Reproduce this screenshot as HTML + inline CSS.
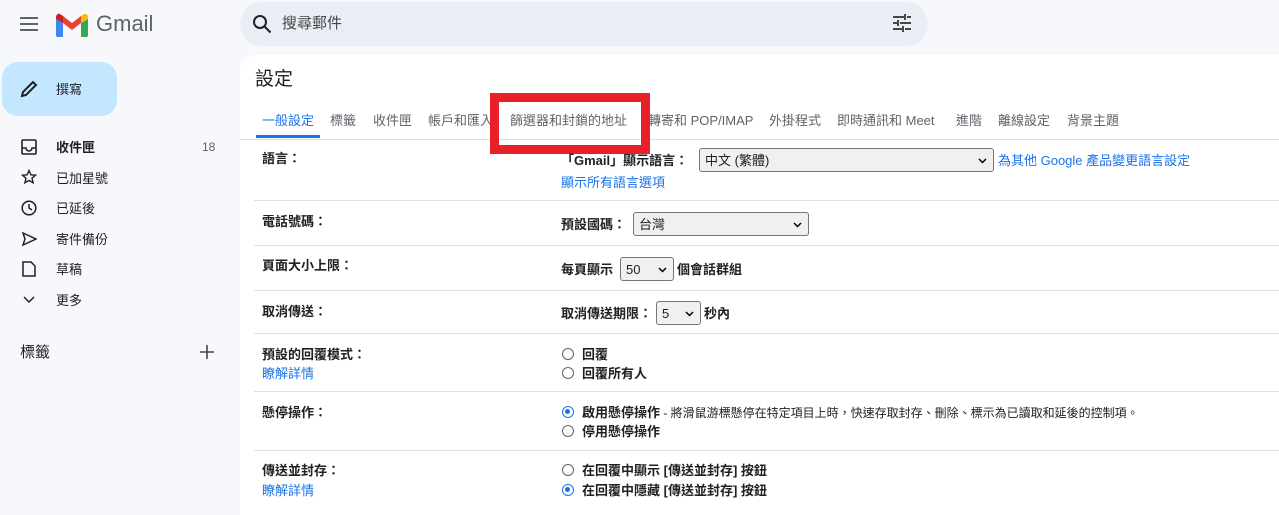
<!DOCTYPE html>
<html><head><meta charset="utf-8"><style>
*{margin:0;padding:0;box-sizing:border-box}
body{width:1279px;height:507px;overflow:hidden;background:#f6f8fc;font-family:"Liberation Sans","Noto Sans CJK TC",sans-serif;color:#202124;position:relative;font-size:13px;line-height:15px}
.a{position:absolute;white-space:nowrap}
.panel{position:absolute;left:240px;top:55px;width:1039px;height:460px;background:#fff;border-radius:16px 0 0 0}
.tab{position:absolute;top:113px;font-size:13px;color:#5f6368}
.hr{position:absolute;left:254px;width:1025px;height:1px;background:#e0e0e0}
.lbl{position:absolute;left:262px;font-size:13px;font-weight:bold;color:#202124}
.v{position:absolute;font-size:13px;font-weight:bold;white-space:nowrap}
.link{color:#1a73e8;font-weight:normal}
.sel{position:absolute;height:24px;border:1px solid #767676;border-radius:3px;background:#f0f0f0;font-size:13px;padding:4px 5px;font-weight:normal}
.sel svg{position:absolute;right:6px;top:9px}
.r{position:absolute;width:12px;height:12px;border:1.5px solid #5f6368;border-radius:50%}
.r.on{border-color:#1a73e8}
.r.on:after{content:"";position:absolute;left:2px;top:2px;width:5px;height:5px;border-radius:50%;background:#1a73e8}
.nav{position:absolute;left:56px;font-size:13px;color:#202124}
</style></head><body>
<svg class="a" style="left:19px;top:16px" width="20" height="16"><path d="M1 2h18M1 8h18M1 14h18" stroke="#5f6368" stroke-width="2"/></svg>
<svg class="a" style="left:56px;top:13px" width="32" height="24" viewBox="0 0 32 24"><path d="M0 6v16a2 2 0 0 0 2 2h5V10z" fill="#4285f4"/><path d="M25 10v14h5a2 2 0 0 0 2-2V6z" fill="#34a853"/><path d="M7 10l9 7 9-7V3L16 10 7 3z" fill="#ea4335"/><path d="M0 6l7 4V3L4 1C2 0 0 2 0 4z" fill="#c5221f"/><path d="M25 3v7l7-4V4c0-2-2-4-4-3z" fill="#fbbc04"/></svg>
<div class="a" style="left:96px;top:12px;font-size:22px;line-height:24px;color:#5f6368">Gmail</div>
<div class="a" style="left:240px;top:2px;width:688px;height:44px;background:#e9eef6;border-radius:22px"></div>
<svg class="a" style="left:252px;top:14px" width="20" height="20"><circle cx="8" cy="8" r="6" fill="none" stroke="#202124" stroke-width="2"/><path d="M12.5 12.5l6 6" stroke="#202124" stroke-width="2"/></svg>
<div class="a" style="left:282px;top:15px;font-size:15px;line-height:17px;color:#444746">搜尋郵件</div>
<svg class="a" style="left:892px;top:14px" width="20" height="18"><path d="M1 3h11M15 3h4M1 9h4M8 9h11M1 15h9M13 15h6M13 0v6M6 6v6M11 12v6" stroke="#444746" stroke-width="2"/></svg>
<div class="a" style="left:2px;top:62px;width:115px;height:54px;background:#c2e7ff;border-radius:16px"></div>
<svg class="a" style="left:20px;top:80px" width="18" height="18"><path d="M2 16l1-4L13 2l3 3L6 15z" fill="none" stroke="#202124" stroke-width="2"/></svg>
<div class="a" style="left:56px;top:82px;font-size:13px">撰寫</div>
<svg class="a" style="left:21px;top:139px" width="16" height="16"><rect x="1" y="1" width="14" height="14" rx="1" fill="none" stroke="#202124" stroke-width="1.6"/><path d="M1 9h4a3 3 0 0 0 6 0h4" fill="none" stroke="#202124" stroke-width="1.6"/></svg>
<div class="nav" style="top:140px;font-weight:bold">收件匣</div><div class="a" style="left:202px;top:140px;font-size:12px;color:#5f6368">18</div>
<svg class="a" style="left:21px;top:169px" width="16" height="16"><path d="M8 1.5l1.9 4.3 4.6.4-3.5 3 1.1 4.6L8 11.4l-4.1 2.4L5 9.2l-3.5-3 4.6-.4z" fill="none" stroke="#202124" stroke-width="1.4"/></svg><div class="nav" style="top:171px">已加星號</div>
<svg class="a" style="left:21px;top:200px" width="16" height="16"><circle cx="8" cy="8" r="6.8" fill="none" stroke="#202124" stroke-width="1.5"/><path d="M8 4v4l3 2" fill="none" stroke="#202124" stroke-width="1.5"/></svg><div class="nav" style="top:201px">已延後</div>
<svg class="a" style="left:21px;top:231px" width="16" height="16"><path d="M2 2l13 6-13 6 2-6z" fill="none" stroke="#202124" stroke-width="1.5"/></svg><div class="nav" style="top:232px">寄件備份</div>
<svg class="a" style="left:22px;top:261px" width="14" height="16"><path d="M1 1h8l4 4v10H1z" fill="none" stroke="#202124" stroke-width="1.5"/></svg><div class="nav" style="top:262px">草稿</div>
<svg class="a" style="left:23px;top:296px" width="12" height="8"><path d="M1 1l5 5 5-5" fill="none" stroke="#202124" stroke-width="1.5"/></svg><div class="nav" style="top:293px">更多</div>
<div class="a" style="left:20px;top:344px;font-size:15px;line-height:17px">標籤</div>
<svg class="a" style="left:200px;top:345px" width="14" height="14"><path d="M7 0v14M0 7h14" stroke="#444746" stroke-width="1.6"/></svg>
<div class="panel"></div>
<div class="a" style="left:255px;top:69px;font-size:19px;line-height:22px;color:#202124">設定</div>
<div class="tab" style="left:262px;color:#1a73e8">一般設定</div>
<div class="a" style="left:256px;top:135px;width:64px;height:3px;background:#1a73e8"></div>
<div class="tab" style="left:330px">標籤</div>
<div class="tab" style="left:373px">收件匣</div>
<div class="tab" style="left:428px">帳戶和匯入</div>
<div class="tab" style="left:510px">篩選器和封鎖的地址</div>
<div class="tab" style="left:648px">轉寄和 POP/IMAP</div>
<div class="tab" style="left:769px">外掛程式</div>
<div class="tab" style="left:837px">即時通訊和 Meet</div>
<div class="tab" style="left:956px">進階</div>
<div class="tab" style="left:998px">離線設定</div>
<div class="tab" style="left:1067px">背景主題</div>
<div class="a" style="left:240px;top:139px;width:1039px;height:1px;background:#e0e0e0"></div>
<div class="a" style="left:490px;top:93px;width:160px;height:61px;border:9px solid #e8202a"></div>
<div class="lbl" style="top:151px">語言：</div>
<div class="v" style="left:561px;top:153px">「Gmail」顯示語言：</div>
<div class="sel" style="left:699px;top:148px;width:295px">中文 (繁體)<svg width="9" height="6"><path d="M1 1l3.5 3.5L8 1" fill="none" stroke="#000" stroke-width="1.5"/></svg></div>
<div class="v link" style="left:998px;top:153px">為其他 Google 產品變更語言設定</div>
<div class="v link" style="left:561px;top:175px">顯示所有語言選項</div>
<div class="hr" style="top:200px"></div>
<div class="lbl" style="top:214px">電話號碼：</div>
<div class="v" style="left:561px;top:217px">預設國碼：</div>
<div class="sel" style="left:633px;top:212px;width:176px">台灣<svg width="9" height="6"><path d="M1 1l3.5 3.5L8 1" fill="none" stroke="#000" stroke-width="1.5"/></svg></div>
<div class="hr" style="top:245px"></div>
<div class="lbl" style="top:258px">頁面大小上限：</div>
<div class="v" style="left:561px;top:262px">每頁顯示</div>
<div class="sel" style="left:620px;top:257px;width:54px">50<svg width="9" height="6"><path d="M1 1l3.5 3.5L8 1" fill="none" stroke="#000" stroke-width="1.5"/></svg></div>
<div class="v" style="left:677px;top:262px">個會話群組</div>
<div class="hr" style="top:290px"></div>
<div class="lbl" style="top:304px">取消傳送：</div>
<div class="v" style="left:561px;top:306px">取消傳送期限：</div>
<div class="sel" style="left:656px;top:301px;width:45px">5<svg width="9" height="6"><path d="M1 1l3.5 3.5L8 1" fill="none" stroke="#000" stroke-width="1.5"/></svg></div>
<div class="v" style="left:704px;top:306px">秒內</div>
<div class="hr" style="top:333px"></div>
<div class="lbl" style="top:347px">預設的回覆模式：</div>
<div class="v link" style="left:262px;top:366px">瞭解詳情</div>
<div class="r" style="left:562px;top:348px"></div><div class="v" style="left:582px;top:347px">回覆</div>
<div class="r" style="left:562px;top:367px"></div><div class="v" style="left:582px;top:366px">回覆所有人</div>
<div class="hr" style="top:391px"></div>
<div class="lbl" style="top:405px">懸停操作：</div>
<div class="r on" style="left:562px;top:406px"></div><div class="v" style="left:582px;top:405px">啟用懸停操作<span style="font-weight:normal;font-size:12px"> - 將滑鼠游標懸停在特定項目上時，快速存取封存、刪除、標示為已讀取和延後的控制項。</span></div>
<div class="r" style="left:562px;top:425px"></div><div class="v" style="left:582px;top:424px">停用懸停操作</div>
<div class="hr" style="top:450px"></div>
<div class="lbl" style="top:463px">傳送並封存：</div>
<div class="v link" style="left:262px;top:483px">瞭解詳情</div>
<div class="r" style="left:562px;top:464px"></div><div class="v" style="left:582px;top:463px">在回覆中顯示 [傳送並封存] 按鈕</div>
<div class="r on" style="left:562px;top:484px"></div><div class="v" style="left:582px;top:483px">在回覆中隱藏 [傳送並封存] 按鈕</div>
</body></html>
